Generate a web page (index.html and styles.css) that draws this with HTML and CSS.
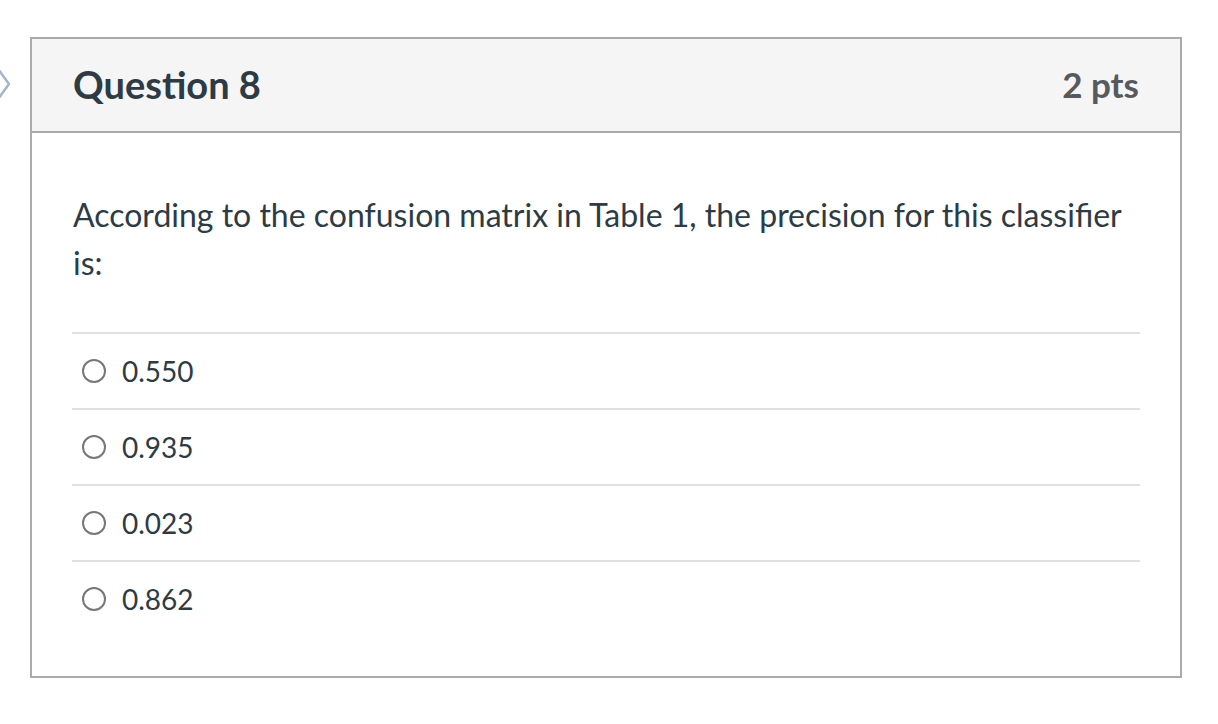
FILE: index.html
```html
<!DOCTYPE html>
<html>
<head>
<meta charset="utf-8">
<link rel="stylesheet" href="styles.css">
</head>
<body>
<div class="page">
  <div class="flag">
    <svg width="30" height="40" viewBox="0 0 30 40"><path d="M-2 2 L9 17 L-2 32" fill="none" stroke="#a3b6c8" stroke-width="2.5" stroke-linejoin="round"/></svg>
  </div>
  <div class="card">
    <div class="header">
      <h2 class="title">Question 8</h2>
      <div class="pts">2 pts</div>
    </div>
    <div class="qbody">
      <p class="qtext">According to the confusion matrix in Table 1, the precision for this classifier is:</p>
      <div class="answers">
        <label class="answer"><span class="radio"></span><span class="atext">0.550</span></label>
        <label class="answer"><span class="radio"></span><span class="atext">0.935</span></label>
        <label class="answer"><span class="radio"></span><span class="atext">0.023</span></label>
        <label class="answer"><span class="radio"></span><span class="atext">0.862</span></label>
      </div>
    </div>
  </div>
</div>
</body>
</html>
```

FILE: styles.css
```css
* { box-sizing: border-box; }
html, body { margin: 0; padding: 0; background: #fff; }
body { font-family: Lato, "Open Sans", sans-serif; color: #2d3b45; }
.page { display: flex; align-items: flex-start; padding-top: 37px; }
.flag { width: 30px; flex: none; padding-top: 30px; }
.flag svg { display: block; }
.card {
  width: 1152px;
  height: 641px;
  border: 2px solid #aaaaaa;
  flex: none;
}
.header {
  height: 94px;
  background: #f5f5f5;
  border-bottom: 2px solid #aaaaaa;
  display: flex;
  align-items: center;
  justify-content: space-between;
  padding: 0 41px 3px;
}
.title { margin: 0; font-size: 38px; font-weight: 700; color: #2d3b45; }
.pts { font-size: 35px; font-weight: 700; color: #555a5e; }
.qbody { padding: 58px 40px 40px 41px; }
.qtext { margin: 0 0 45px; font-size: 32px; line-height: 48px; color: #2d3b45; }
.answers { margin-left: -1px; }
.answer {
  display: flex;
  align-items: center;
  height: 76px;
  border-top: 2px solid #e0e0e0;
  padding-left: 10px;
}
.radio {
  width: 24px; height: 24px;
  border: 2px solid #777;
  border-radius: 50%;
  flex: none;
  margin-right: 16px;
}
.atext { font-size: 28px; color: #2d3b45; }
```
